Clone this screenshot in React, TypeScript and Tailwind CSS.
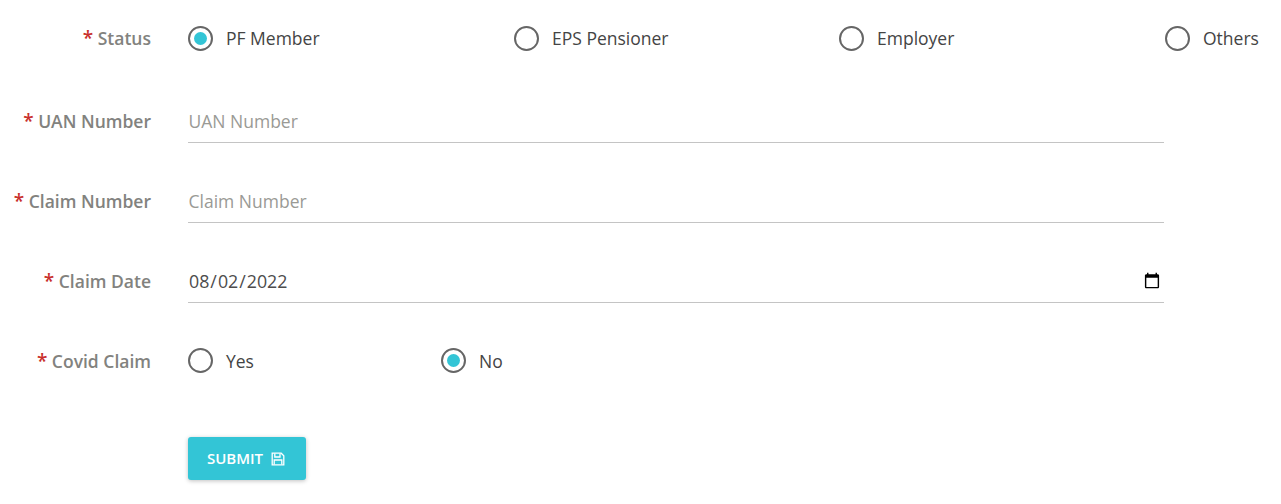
import React from "react";

const font = { fontFamily: '"Open Sans", sans-serif' };

function Label({ text }: { text: string }) {
  return (
    <div className="w-[151px] shrink-0 text-right text-[17.5px] font-semibold leading-6 text-[#82827e]">
      <span className="text-[19px] text-[#c9302c]">*</span> {text}
    </div>
  );
}

function Radio({ label, checked, className, lift }: { label: string; checked?: boolean; className: string; lift?: boolean }) {
  return (
    <div className={`flex shrink-0 items-center gap-[13px] ${className}`}>
      <span className="flex h-[25px] w-[25px] items-center justify-center rounded-full border-2 border-[#666666] bg-white">
        {checked && <span className="h-[13px] w-[13px] rounded-full bg-[#33c5d6]" />}
      </span>
      <span className={`whitespace-nowrap text-[17.5px] leading-6 text-[#444444] ${lift ? "-translate-y-px" : ""}`}>{label}</span>
    </div>
  );
}

function TextRow({ label, placeholder, first }: { label: string; placeholder: string; first?: boolean }) {
  return (
    <div className={`flex h-[45px] items-start ${first ? "mt-[47px]" : "mt-[35px]"}`}>
      <div className="pt-[11px]"><Label text={label} /></div>
      <input
        placeholder={placeholder}
        className="ml-[37px] h-[45px] w-[976px] border-b border-[#c4c4c4] bg-transparent pl-[0.5px] pt-[2px] text-[17.5px] text-[#444444] outline-none placeholder:text-[#9a9a95]"
      />
    </div>
  );
}

export default function App() {
  return (
    <div className="h-[504px] w-[1281px] overflow-hidden bg-white pt-[26px]" style={font}>
      <div className="flex h-[25px] items-center">
        <div className="-translate-y-px"><Label text="Status" /></div>
        <div className="ml-[37px] flex">
          <Radio lift label="PF Member" checked className="w-[326px]" />
          <Radio lift label="EPS Pensioner" className="w-[325px]" />
          <Radio lift label="Employer" className="w-[326px]" />
          <Radio lift label="Others" className="w-[120px]" />
        </div>
      </div>
      <TextRow first label="UAN Number" placeholder="UAN Number" />
      <TextRow label="Claim Number" placeholder="Claim Number" />
      <div className="mt-[35px] flex h-[45px] items-start">
        <div className="pt-[11px]"><Label text="Claim Date" /></div>
        <input
          type="date"
          defaultValue="2022-08-02"
          className="ml-[37px] h-[45px] w-[976px] border-b border-[#c4c4c4] bg-transparent pr-px pt-[2px] text-[17.8px] text-[#4c4c4c] outline-none"
        />
      </div>
      <div className="mt-[45px] flex h-[25px] items-center">
        <Label text="Covid Claim" />
        <div className="ml-[37px] flex">
          <Radio label="Yes" className="w-[253px]" />
          <Radio label="No" checked className="w-[120px]" />
        </div>
      </div>
      <div className="ml-[188px] mt-[64px]">
        <button className="flex h-[43px] w-[118px] items-center justify-center gap-[8px] rounded-[3px] bg-[#33c5d6] pr-[2px] text-[15px] font-semibold text-white shadow-[0_1px_4px_rgba(0,0,0,0.25)]">
          SUBMIT
          <svg width="14" height="14" viewBox="0 0 14 14" fill="none" stroke="white" strokeWidth="1.3">
            <path d="M1.2 1.2h9l2.6 2.6v9H1.2z" />
            <path d="M3.8 1.4v3.6h5.2V1.4" />
            <path d="M3.2 12.6V8h7.6v4.6" />
          </svg>
        </button>
      </div>
    </div>
  );
}
